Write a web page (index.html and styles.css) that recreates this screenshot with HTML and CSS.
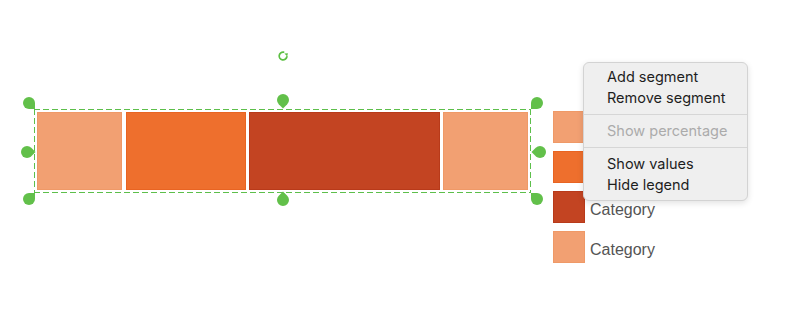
FILE: index.html
```html
<!DOCTYPE html>
<html>
<head>
<meta charset="utf-8">
<link rel="stylesheet" href="styles.css">
</head>
<body>
<div class="canvas">
  <svg class="rotate" width="12" height="12" viewBox="0 0 12 12">
    <path d="M6.6 2.1 A3.9 3.9 0 1 0 9.9 6.8" fill="none" stroke="#5cbf43" stroke-width="1.7" stroke-linecap="round"/>
    <path d="M7.4 3.4 L10.9 3.2 L10.2 6.6 Z" fill="#5cbf43"/>
  </svg>

  <div class="selection">
    <div class="bars">
      <div class="bar light" style="flex-basis:85px"></div>
      <div class="bar orange" style="flex-basis:120px"></div>
      <div class="bar dark" style="flex-basis:191px"></div>
      <div class="bar light" style="flex-basis:85px"></div>
    </div>
  </div>

  <div class="handle h-tl"></div>
  <div class="handle h-tm"></div>
  <div class="handle h-tr"></div>
  <div class="handle h-ml"></div>
  <div class="handle h-mr"></div>
  <div class="handle h-bl"></div>
  <div class="handle h-bm"></div>
  <div class="handle h-br"></div>

  <div class="legend">
    <div class="legend-item"><span class="swatch light"></span><span class="label">Category</span></div>
    <div class="legend-item"><span class="swatch orange"></span><span class="label">Category</span></div>
    <div class="legend-item"><span class="swatch dark"></span><span class="label">Category</span></div>
    <div class="legend-item"><span class="swatch light"></span><span class="label">Category</span></div>
  </div>

  <div class="menu">
    <div class="menu-item">Add segment</div>
    <div class="menu-item">Remove segment</div>
    <div class="sep"></div>
    <div class="menu-item disabled">Show percentage</div>
    <div class="sep"></div>
    <div class="menu-item">Show values</div>
    <div class="menu-item">Hide legend</div>
  </div>
</div>
</body>
</html>
```

FILE: styles.css
```css
html, body {
  margin: 0;
  padding: 0;
  background: #ffffff;
}

.canvas {
  position: relative;
  width: 800px;
  height: 327px;
  overflow: hidden;
  font-family: "Liberation Sans", Arial, sans-serif;
}

.rotate {
  position: absolute;
  left: 277px;
  top: 50px;
}

.selection {
  position: absolute;
  left: 34px;
  top: 109px;
  width: 495px;
  height: 82px;
  padding: 1px;
  background:
    repeating-linear-gradient(to right, #5dbf4b 0 6px, transparent 6px 9px) left top / 100% 1px no-repeat,
    repeating-linear-gradient(to right, #5dbf4b 0 6px, transparent 6px 9px) left bottom / 100% 1px no-repeat,
    repeating-linear-gradient(to bottom, #5dbf4b 0 6px, transparent 6px 9px) left top / 1px 100% no-repeat,
    repeating-linear-gradient(to bottom, #5dbf4b 0 6px, transparent 6px 9px) right top / 1px 100% no-repeat;
}

.bars {
  display: flex;
  gap: 3px;
  padding: 2px;
  height: 78px;
}

.bar {
  flex-grow: 0;
  flex-shrink: 0;
  box-sizing: border-box;
}

.bars .bar:first-child {
  margin-right: 1px;
}

.light {
  background: #f2a072;
  border: 1px solid #ef9967;
}

.orange {
  background: #ee6f2d;
  border: 1px solid #e86422;
}

.dark {
  background: #c34422;
  border: 1px solid #b83a1a;
}

.handle {
  position: absolute;
  width: 12px;
  height: 12px;
  background: #62c04a;
}

.h-tl { left: 23px; top: 97px; border-radius: 50% 50% 0 50%; }
.h-tr { left: 531px; top: 97px; border-radius: 50% 50% 50% 0; }
.h-bl { left: 23px; top: 193px; border-radius: 50% 0 50% 50%; }
.h-br { left: 531px; top: 193px; border-radius: 0 50% 50% 50%; }
.h-tm { left: 277px; top: 94px; border-radius: 50% 50% 0 50%; transform: rotate(45deg); }
.h-bm { left: 277px; top: 194px; border-radius: 0 50% 50% 50%; transform: rotate(45deg); }
.h-ml { left: 21px; top: 146px; border-radius: 50% 50% 0 50%; transform: rotate(-45deg); }
.h-mr { left: 534px; top: 146px; border-radius: 0 50% 50% 50%; transform: rotate(-45deg); }

.legend {
  position: absolute;
  left: 553px;
  top: 111px;
  display: flex;
  flex-direction: column;
  gap: 8px;
}

.legend-item {
  display: flex;
  align-items: center;
  height: 32px;
}

.swatch {
  display: block;
  width: 32px;
  height: 32px;
  box-sizing: border-box;
}

.label {
  margin-left: 5px;
  padding-top: 6px;
  font-size: 16px;
  color: #545454;
}

.menu {
  position: absolute;
  left: 583px;
  top: 62px;
  width: 163px;
  box-sizing: content-box;
  padding: 4px 0;
  background: #efefef;
  border: 1px solid #d3d3d3;
  border-radius: 6px;
  box-shadow: 0 2px 6px rgba(0, 0, 0, 0.12);
  font-family: Inter, "Liberation Sans", sans-serif;
}

.menu-item {
  height: 21px;
  line-height: 20px;
  padding-left: 23px;
  font-size: 14.5px;
  color: #1e1e1e;
}

.menu-item.disabled {
  color: #ababab;
}

.sep {
  height: 1px;
  margin: 5px 0 6px;
  background: #d6d6d6;
}
```
